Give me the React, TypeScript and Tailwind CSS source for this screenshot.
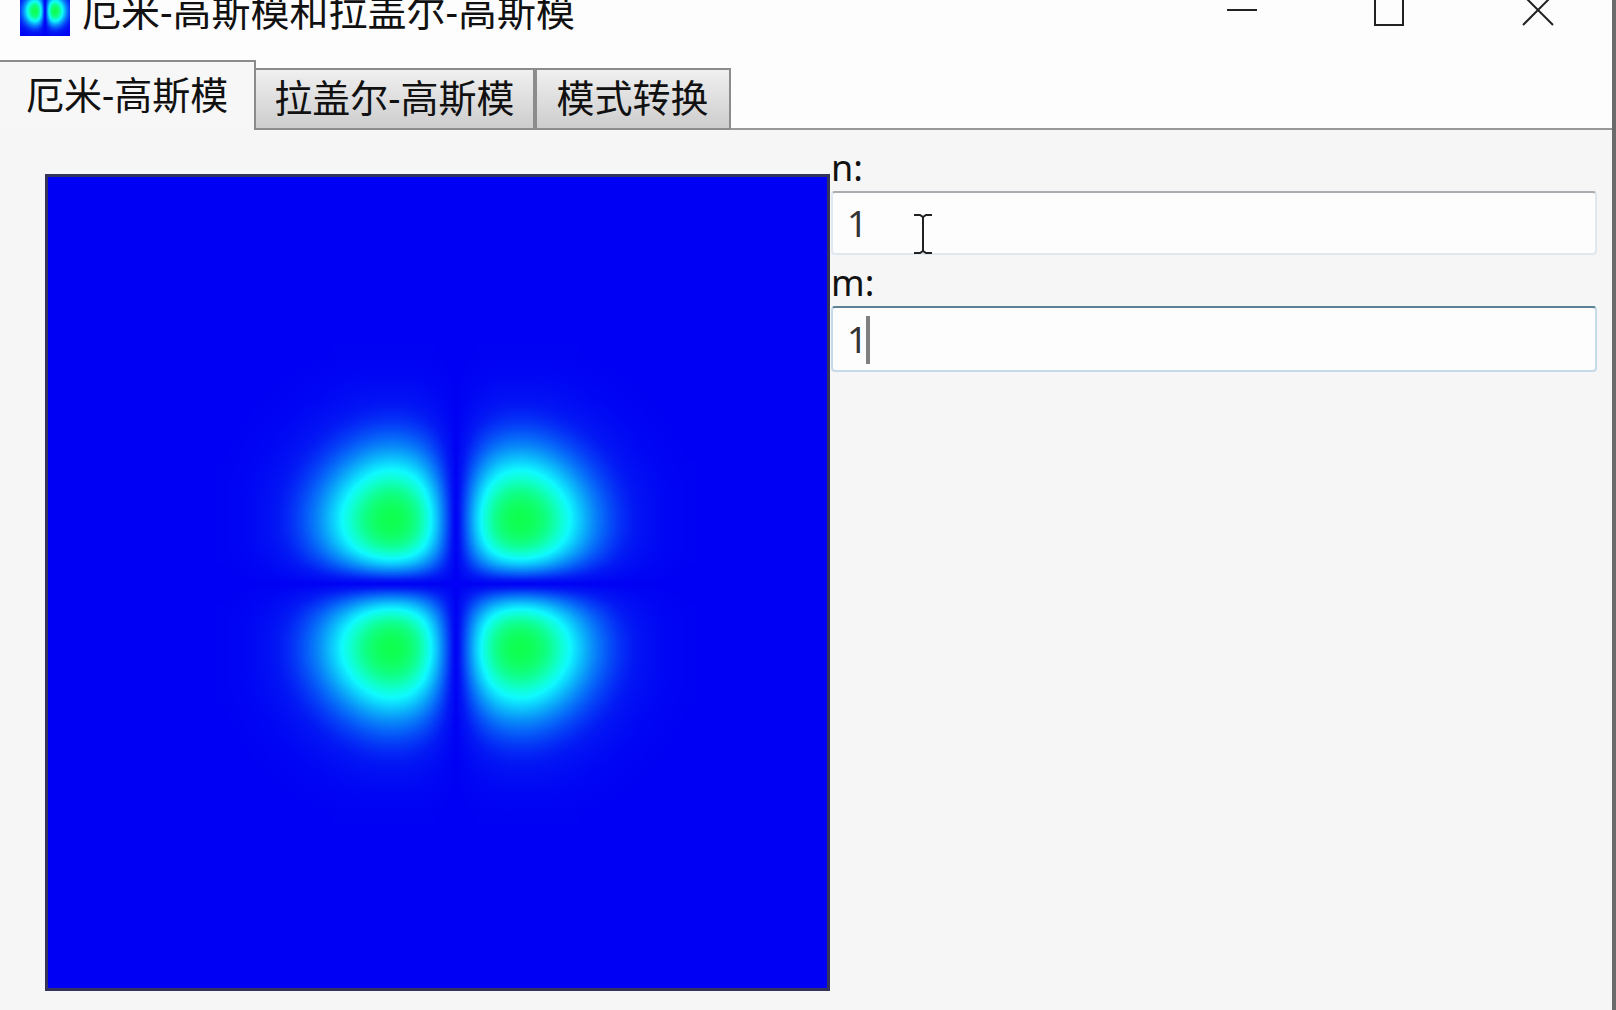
import { useId } from 'react'

interface ModePlotProps {
  n: number
  m: number
  /** Rayon des lobes, dans les unités du viewBox */
  radius: number
  viewBox: string
  label: string
  className?: string
}

const TABS = ['厄米-高斯模', '拉盖尔-高斯模', '模式转换']

const EXTENT = 7
const STOPS = Array.from({ length: 141 }, (_, i) => i / 140)

// Amplitude 1D normalisée (ordres 0 et 1)
const profile = (order: number, t: number) => {
  const u = (t * 2 - 1) * EXTENT
  return order === 0 ? Math.exp((-u * u) / 2) : Math.abs(u) * Math.exp((1 - u * u) / 2)
}

const grey = (value: number) => {
  const v = Math.round(Math.min(1, value) * 255)
  return `rgb(${v},${v},${v})`
}

function ModePlot({ n, m, radius, viewBox, label, className }: ModePlotProps) {
  const id = useId().replace(/[^a-zA-Z0-9]/g, '')
  const half = radius * EXTENT
  const box = { x: -half, y: -half, width: half * 2, height: half * 2 }

  return (
    <svg viewBox={viewBox} preserveAspectRatio="none" role="img" aria-label={label} className={className}>
      <defs>
        <linearGradient id={`${id}x`}>
          {STOPS.map((t) => (
            <stop key={t} offset={t} stopColor={grey(profile(n, t))} />
          ))}
        </linearGradient>
        <linearGradient id={`${id}y`} x1="0" y1="0" x2="0" y2="1">
          {STOPS.map((t) => (
            <stop key={t} offset={t} stopColor={grey(profile(m, t))} />
          ))}
        </linearGradient>
        {/* bleu -> cyan -> vert */}
        <filter id={`${id}f`} colorInterpolationFilters="sRGB" x="0" y="0" width="1" height="1">
          <feComponentTransfer>
            <feFuncR type="table" tableValues="0 0.01 0.02 0.03 0.04 0.05 0.06 0.06 0.06 0.06 0.06" />
            <feFuncG type="table" tableValues="0 0.1 0.27 0.45 0.63 0.81 0.98 1 1 1 1" />
            <feFuncB type="table" tableValues="0.96 0.96 0.97 0.98 0.98 0.99 1 0.82 0.62 0.45 0.31" />
          </feComponentTransfer>
        </filter>
      </defs>
      <g filter={`url(#${id}f)`}>
        <g className="isolate">
          <rect {...box} fill={`url(#${id}x)`} />
          <rect {...box} fill={`url(#${id}y)`} className="mix-blend-multiply" />
        </g>
      </g>
    </svg>
  )
}

function TitleBar() {
  return (
    <header className="flex h-[60px] items-start bg-[#fdfdfd] pl-5">
      <ModePlot n={1} m={0} radius={10} viewBox="-25 -25 50 50" label="" className="-mt-3.5 h-[50px] w-[50px] shrink-0 bg-[#0000f5]" />
      <h1 className="-mt-2.5 ml-3 grow text-[39px] leading-[42px] whitespace-nowrap">厄米-高斯模和拉盖尔-高斯模</h1>
      <div className="-mt-4 flex">
        <button type="button" aria-label="最小化" className="flex h-[52px] w-[148px] items-center justify-center">
          <svg viewBox="0 0 32 32" className="size-8" fill="none" stroke="#222" strokeWidth="2">
            <path d="M1 16h30" />
          </svg>
        </button>
        <button type="button" aria-label="最大化" className="flex h-[52px] w-[148px] items-center justify-center">
          <svg viewBox="0 0 32 32" className="size-8" fill="none" stroke="#222" strokeWidth="2">
            <path d="M1 2h28v29H1z" />
          </svg>
        </button>
        <button type="button" aria-label="关闭" className="flex h-[52px] w-[148px] items-center justify-center">
          <svg viewBox="0 0 32 32" className="size-8" fill="none" stroke="#222" strokeWidth="2">
            <path d="M1 1l30 30M31 1L1 31" />
          </svg>
        </button>
      </div>
    </header>
  )
}

export default function App() {
  return (
    <div className="flex min-h-screen flex-col overflow-hidden border-r-4 border-[#6b6b6b] bg-[#fdfdfd] font-['Noto_Sans','Noto_Sans_CJK_SC',sans-serif] text-[#111]">
      <TitleBar />

      <div role="tablist" className="flex items-end">
        {TABS.map((tab, i) =>
          i === 0 ? (
            <button
              key={tab}
              type="button"
              role="tab"
              aria-selected="true"
              className="h-[70px] border-t-2 border-r-2 border-[#8c8c8c] bg-[#f7f7f7] px-[26px] pb-1 text-[38px] leading-[62px] whitespace-nowrap"
            >
              {tab}
            </button>
          ) : (
            <button
              key={tab}
              type="button"
              role="tab"
              aria-selected="false"
              className="h-[62px] border-t-2 border-r-2 border-b-2 border-[#8c8c8c] bg-linear-to-b from-[#f0f0f0] to-[#cdcdcd] px-[18px] pb-1 text-[38px] leading-[54px] whitespace-nowrap last-of-type:border-l-2 last-of-type:px-5"
            >
              {tab}
            </button>
          )
        )}
        <div className="grow border-b-2 border-[#999]" />
      </div>

      <main className="grid grow grid-cols-[785fr_767fr] items-start bg-[#f6f6f6] pr-[15px] pb-4 pl-[45px]">
        <ModePlot
          n={1}
          m={1}
          radius={64}
          viewBox="-408 -407 779 811"
          label="厄米-高斯模"
          className="mt-[44px] aspect-[785/817] w-full border-3 border-[#33335c] bg-[#0000f5]"
        />
        <form className="flex flex-col pt-[15px] pl-px text-[36px] leading-[46px]">
          <label htmlFor="n">n:</label>
          <div className="relative">
            <input
              id="n"
              defaultValue="1"
              className="block h-16 w-full rounded border-2 border-[#dfe7ef] border-t-[#abadb3] bg-[#fdfdfd] px-3.5 text-[#333]"
            />
            {/* Pointeur texte de la souris */}
            <svg viewBox="0 0 18 42" className="absolute top-[22px] left-[83px] h-[42px] w-[18px]" fill="none" stroke="#222" strokeWidth="2">
              <path d="M0 2h6l3 2 3-2h6M9 3v36M0 40h6l3-2 3 2h6" />
            </svg>
          </div>
          <label htmlFor="m" className="pt-[5px]">
            m:
          </label>
          <div className="relative">
            <input
              id="m"
              defaultValue="1"
              className="block h-[66px] w-full rounded border-2 border-[#c5dbe8] border-t-[#5f8196] bg-[#fdfdfd] px-3.5 text-[#333]"
            />
            <span className="absolute top-2.5 left-[35px] h-12 w-1 bg-[#808080]" />
          </div>
        </form>
      </main>
    </div>
  )
}
